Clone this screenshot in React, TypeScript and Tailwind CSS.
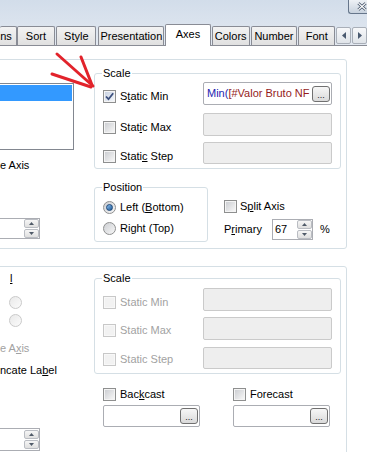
import type { ReactNode } from "react";

function Ul({ children }: { children: ReactNode }) {
  return <span className="underline decoration-1 underline-offset-[1px]">{children}</span>;
}

function Check({ checked = false, disabled = false }: { checked?: boolean; disabled?: boolean }) {
  return (
    <span
      className={`relative flex h-[13px] w-[13px] shrink-0 border p-[1px] ${
        disabled ? "border-[#c8c8c8] bg-[#f8f8f8]" : "border-[#8e8f8f] bg-[#f4f4f4]"
      }`}
    >
      <span
        className={`block h-full w-full ${
          disabled
            ? "bg-[#f2f2f2]"
            : checked
            ? "bg-gradient-to-br from-[#c9d2e2] to-[#f3f6fa]"
            : "bg-gradient-to-br from-[#cdcfd3] to-[#f6f6f6]"
        }`}
      />
      {checked && (
        <svg className="absolute left-[1px] top-[1px]" width="9" height="9" viewBox="0 0 9 9">
          <path d="M1 4.5 L3.5 7.2 L8.2 1.2" fill="none" stroke="#3b4f7d" strokeWidth="1.8" />
        </svg>
      )}
    </span>
  );
}

function Radio({ checked = false, disabled = false }: { checked?: boolean; disabled?: boolean }) {
  return (
    <span
      className={`flex h-[13px] w-[13px] shrink-0 items-center justify-center rounded-full border ${
        disabled
          ? "border-[#cacaca] bg-gradient-to-br from-[#e9e9e9] to-[#fbfbfb]"
          : "border-[#8e8f8f] bg-gradient-to-br from-[#cdcfd3] to-[#f7f7f7]"
      }`}
    >
      {checked && (
        <span className="h-[7px] w-[7px] rounded-full border border-[#1b4677] bg-gradient-to-br from-[#8cc0ef] to-[#1d5996]" />
      )}
    </span>
  );
}

function Dots() {
  return (
    <span className="flex h-[16px] w-[18px] shrink-0 items-end justify-center rounded-[3px] border border-[#707070] bg-gradient-to-b from-[#f7f7f7] to-[#dadada] pb-[3px] text-[9px] leading-[5px] text-[#222]">
      ...
    </span>
  );
}

function SpinBtn({ up = false }: { up?: boolean }) {
  return (
    <span className="flex h-[9px] items-center justify-center rounded-[2px] border border-[#babdc3] bg-gradient-to-b from-[#f6f6f6] to-[#dfdfdf]">
      <svg width="5" height="3" viewBox="0 0 5 3">
        <path d={up ? "M0 3 L2.5 0 L5 3Z" : "M0 0 L2.5 3 L5 0Z"} fill="#4f5a68" />
      </svg>
    </span>
  );
}

function Spinner({ className, value }: { className: string; value?: string }) {
  return (
    <div className={`flex border border-[#abadb3] bg-white ${className}`}>
      <span className="flex-1 self-center pl-[2px]">{value}</span>
      <div className="flex w-[15px] flex-col justify-center gap-[1px]">
        <SpinBtn up />
        <SpinBtn />
      </div>
    </div>
  );
}

function Tab({ label, className, active = false }: { label: ReactNode; className: string; active?: boolean }) {
  if (active)
    return (
      <div
        className={`relative z-10 -mb-[1px] flex h-[22px] justify-center rounded-t-[2px] border border-b-0 border-[#898c95] bg-white pt-[3px] ${className}`}
      >
        {label}
      </div>
    );
  return (
    <div
      className={`flex h-[19px] items-center justify-center rounded-t-[2px] border border-b-0 border-[#898c95] bg-gradient-to-b from-[#f3f3f3] to-[#e0e0e0] ${className}`}
    >
      {label}
    </div>
  );
}

function ScaleBox({ disabled = false, className }: { disabled?: boolean; className: string }) {
  const text = disabled ? "text-[#a2a2a2]" : "";
  const field = "h-[23px] w-[129px] rounded-[2px] border border-[#cacaca] bg-[#eeeeee]";
  return (
    <fieldset className={`h-[103px] rounded-[3px] border border-[#d5dfe5] px-[8px] ${className}`}>
      <legend className="-ml-[1px] px-[1px] leading-[14px]">Scale</legend>
      <div className={`flex items-start ${disabled ? "mt-[3px]" : "mt-[2px]"}`}>
        <div className="mt-[8px] flex w-[100px] items-center gap-[4px]">
          <Check checked={!disabled} disabled={disabled} />
          <span className={text}>{disabled ? "Static Min" : <>S<Ul>t</Ul>atic Min</>}</span>
        </div>
        {disabled ? (
          <div className={field} />
        ) : (
          <div className="flex h-[23px] w-[129px] items-center rounded-[2px] border border-[#abadb3] bg-white pl-[3px] pr-[1px]">
            <span className="flex-1 overflow-hidden whitespace-nowrap">
              <span className="text-[#2323b0]">Min(</span>
              <span className="text-[#951b1b]">[#Valor Bruto NF</span>
            </span>
            <Dots />
          </div>
        )}
      </div>
      <div className={`flex items-start ${disabled ? "mt-[6px]" : "mt-[8px]"}`}>
        <div className={`flex w-[100px] items-center gap-[4px] ${disabled ? "mt-[7px]" : "mt-[8px]"}`}>
          <Check disabled={disabled} />
          <span className={text}>{disabled ? "Static Max" : <>Stat<Ul>i</Ul>c Max</>}</span>
        </div>
        <div className={field} />
      </div>
      <div className={`flex items-start ${disabled ? "mt-[7px]" : "mt-[6px]"}`}>
        <div className={`flex w-[100px] items-center gap-[4px] ${disabled ? "mt-[6px]" : "mt-[8px]"}`}>
          <Check disabled={disabled} />
          <span className={text}>{disabled ? "Static Step" : <>Stati<Ul>c</Ul> Step</>}</span>
        </div>
        <div className="h-[22px] w-[129px] rounded-[2px] border border-[#cacaca] bg-[#eeeeee]" />
      </div>
    </fieldset>
  );
}

export default function App() {
  return (
    <div className="relative h-[452px] w-[367px] overflow-hidden bg-white font-['Liberation_Sans',Arial,sans-serif] text-[11px] leading-[13px] text-black">
      <div className="bg-gradient-to-b from-[#d2ddea] to-[#e3e9f1]">
        <div className="flex h-[24px] justify-end">
          <div className="flex h-[14px] w-[19px] items-center rounded-bl-[3px] border-b border-l border-[#66768b] bg-gradient-to-b from-[#eef2f6] to-[#c8d2de] pl-[8px]">
            <svg width="11" height="9" viewBox="0 0 11 9">
              <path d="M1.5 1 L9.5 8 M9.5 1 L1.5 8" stroke="#3a4a60" strokeWidth="3" />
              <path d="M1.5 1 L9.5 8 M9.5 1 L1.5 8" stroke="#ffffff" strokeWidth="1.3" />
            </svg>
          </div>
        </div>
        <div className="flex h-[22px] items-end border-b border-[#898c95]">
          <Tab label="ns" className="w-[17px] justify-end rounded-none border-l-0 pr-[4px]" />
          <Tab label="Sort" className="w-[39px]" />
          <Tab label="Style" className="ml-[1px] w-[41px]" />
          <Tab label="Presentation" className="ml-[2px] w-[67px]" />
          <Tab label="Axes" className="ml-[1px] w-[46px]" active />
          <Tab label="Colors" className="ml-[1px] w-[39px]" />
          <Tab label="Number" className="ml-[1px] w-[47px]" />
          <Tab label="Font" className="ml-[1px] w-[38px]" />
          <div className="mb-[1px] ml-[1px] flex h-[17px] w-[15px] items-center justify-center rounded-[2px] border border-[#a9afb8] bg-gradient-to-b from-[#f7f8fa] to-[#e0e4e9]">
            <svg width="4" height="7" viewBox="0 0 4 7">
              <path d="M4 0 L0 3.5 L4 7Z" fill="#4a5a70" />
            </svg>
          </div>
          <div className="mb-[1px] ml-[1px] flex h-[17px] w-[15px] items-center justify-center rounded-[2px] border border-[#a9afb8] bg-gradient-to-b from-[#f7f8fa] to-[#e0e4e9]">
            <svg width="4" height="7" viewBox="0 0 4 7">
              <path d="M0 0 L4 3.5 L0 7Z" fill="#4a5a70" />
            </svg>
          </div>
        </div>
      </div>

      {/* first axis group */}
      <div className="-ml-[8px] mt-[13px] flex h-[190px] w-[355px] rounded-[3px] border border-[#d5dfe5]">
        <div className="flex w-[101px] flex-col">
          <div className="mt-[23px] h-[67px] w-[81px] border border-[#828790] p-[1px]">
            <div className="h-[16px] bg-[#3399ff]" />
          </div>
          <div className="ml-[7px] mt-[9px]">e Axis</div>
          <Spinner className="mt-[46px] h-[21px] w-[47px]" />
        </div>
        <div className="flex w-[243px] flex-col">
          <ScaleBox className="mt-[6px]" />
          <div className="mt-[11px] flex">
            <fieldset className="h-[62px] w-[114px] rounded-[3px] border border-[#d5dfe5] px-[8px]">
              <legend className="-ml-[1px] px-[1px] leading-[14px]">Position</legend>
              <div className="mt-[7px] flex items-center gap-[4px]">
                <Radio checked />
                <span>
                  Left (<Ul>B</Ul>ottom)
                </span>
              </div>
              <div className="mt-[8px] flex items-center gap-[4px]">
                <Radio />
                <span>Right (Top)</span>
              </div>
            </fieldset>
            <div className="ml-[16px] mt-[20px] flex flex-col">
              <div className="flex items-center gap-[3px]">
                <Check />
                <span>
                  S<Ul>p</Ul>lit Axis
                </span>
              </div>
              <div className="mt-[6px] flex items-center">
                <span className="w-[48px]">
                  P<Ul>r</Ul>imary
                </span>
                <Spinner className="h-[21px] w-[41px]" value="67" />
                <span className="ml-[7px]">%</span>
              </div>
            </div>
          </div>
        </div>
      </div>

      {/* second axis group */}
      <div className="-ml-[8px] mt-[17px] flex h-[200px] w-[355px] rounded-[3px] border border-[#d5dfe5]">
        <div className="flex w-[101px] flex-col">
          <div className="ml-[17px] mt-[5px]">
            <Ul>l</Ul>
          </div>
          <div className="ml-[16px] mt-[11px] flex">
            <Radio disabled />
          </div>
          <div className="ml-[16px] mt-[5px] flex">
            <Radio disabled />
          </div>
          <div className="ml-[7px] mt-[15px] text-[#a2a2a2]">
            e A<Ul>x</Ul>is
          </div>
          <div className="ml-[7px] mt-[9px]">
            ncate La<Ul>b</Ul>el
          </div>
          <Spinner className="mt-[51px] h-[23px] w-[47px]" />
        </div>
        <div className="flex w-[243px] flex-col">
          <ScaleBox className="mt-[4px]" disabled />
          <div className="mt-[14px] flex pl-[9px]">
            <div className="w-[130px]">
              <div className="flex items-center gap-[4px]">
                <Check />
                <span>
                  Bac<Ul>k</Ul>cast
                </span>
              </div>
              <div className="mt-[4px] flex h-[22px] w-[97px] items-center justify-end rounded-[2px] border border-[#abadb3] pr-[1px]">
                <Dots />
              </div>
            </div>
            <div className="w-[98px]">
              <div className="flex items-center gap-[4px]">
                <Check />
                <span>Forecast</span>
              </div>
              <div className="mt-[4px] flex h-[22px] w-[97px] items-center justify-end rounded-[2px] border border-[#abadb3] pr-[1px]">
                <Dots />
              </div>
            </div>
          </div>
        </div>
      </div>

      {/* red annotation arrow */}
      <svg className="pointer-events-none absolute left-0 top-0" width="367" height="452" viewBox="0 0 367 452">
        <g stroke="#e2232b" strokeWidth="3" strokeLinecap="round" fill="none">
          <path d="M57 54 L93 86" />
          <path d="M81 57 L92 85" />
          <path d="M52 74 L91 87" />
        </g>
      </svg>
    </div>
  );
}
